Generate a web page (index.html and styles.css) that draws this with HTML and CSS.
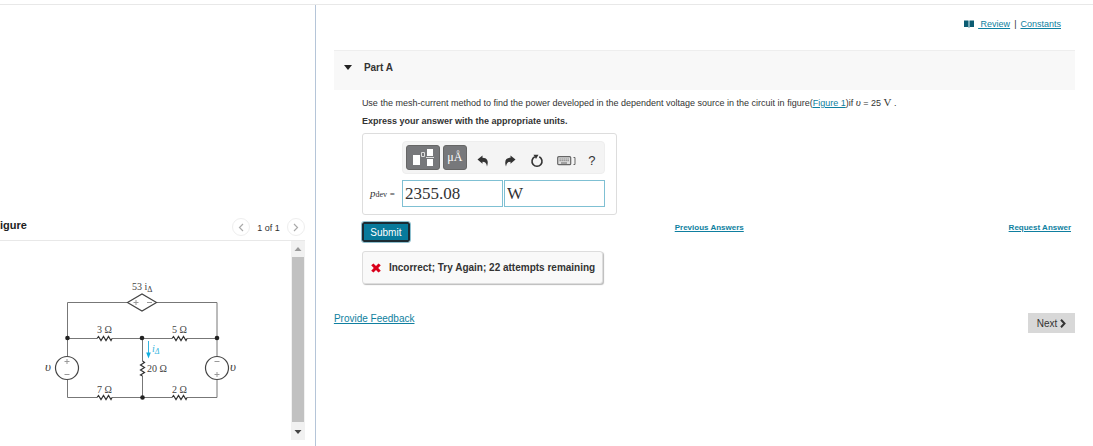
FILE: index.html
```
<!DOCTYPE html>
<html lang="en">

<head>
    <meta charset="UTF-8">
    <meta name="viewport" content="width=device-width, initial-scale=1.0">
    <title>Part A</title>
    <link rel="stylesheet" href="styles.css">
</head>

<body>

    <div class="page">
        <!-- Figure panel -->
        <aside class="figure-panel">
            <div class="figure-header">
                <h2>igure</h2>
                <div class="pager">
                    <button class="pager-button" aria-label="Previous figure">
                        <svg width="6" height="9" viewBox="0 0 6 9"><path d="M5 1 1.500 4.500 5 8" fill="none" stroke="#aaa" stroke-width="1.200"/></svg>
                    </button>
                    <span>1 of 1</span>
                    <button class="pager-button" aria-label="Next figure">
                        <svg width="6" height="9" viewBox="0 0 6 9"><path d="M1 1 4.500 4.500 1 8" fill="none" stroke="#aaa" stroke-width="1.200"/></svg>
                    </button>
                </div>
            </div>
            <div class="figure-body">
                <svg class="circuit" width="260" height="199" viewBox="0 241 260 199">
                    <!-- wires -->
                    <g fill="none" stroke="#777" stroke-width="1">
                        <path d="M128 302.500H67.500V356.500M67.500 379.500V397.500H97M112 397.500H172M187 397.500H217V379.500M217 356.500V302.500H156"/>
                        <path d="M67.500 338.500H97M112 338.500H172M187 338.500H217M142.500 338.500V361M142.500 376V397.500"/>
                    </g>
                    <!-- resistors -->
                    <g fill="none" stroke="#333" stroke-width="1.200">
                        <path d="M97 338.500l1.500-2 2.500 4 2.500-4 2.500 4 2.500-4 2.500 4 1-2"/>
                        <path d="M172 338.500l1.500-2 2.500 4 2.500-4 2.500 4 2.500-4 2.500 4 1-2"/>
                        <path d="M97 397.500l1.500-2 2.500 4 2.500-4 2.500 4 2.500-4 2.500 4 1-2"/>
                        <path d="M172 397.500l1.500-2 2.500 4 2.500-4 2.500 4 2.500-4 2.500 4 1-2"/>
                        <path d="M142.500 361l2 1.500-4 2.500 4 2.500-4 2.500 4 2.500-4 2.500 2 1"/>
                    </g>
                    <!-- sources -->
                    <g fill="#fff" stroke="#444" stroke-width="1.200">
                        <circle cx="67" cy="368" r="11.500"/>
                        <circle cx="217" cy="368" r="11.500"/>
                        <path d="M127.500 302.500 142 294l14.500 8.500L142 311z"/>
                    </g>
                    <g fill="none" stroke="#999" stroke-width="1">
                        <path d="M64.500 361.500h5M67 359v5M64.500 374.500h5M214.500 361.500h5M214.500 374.500h5M217 372v5M133.500 302.500h5M136 300v5M147 302.500h5"/>
                    </g>
                    <g fill="#222">
                        <circle cx="67.500" cy="338" r="2.300"/>
                        <circle cx="142" cy="338" r="2.300"/>
                        <circle cx="217" cy="338" r="2.300"/>
                        <circle cx="142.500" cy="397.500" r="2.300"/>
                    </g>
                    <!-- current arrow -->
                    <path d="M148.500 341v13" stroke="#35b5e0" stroke-width="1"/>
                    <path d="M146.200 352.500h4.600l-2.300 6z" fill="#10aee0"/>
                    <g class="circuit-text">
                        <text x="132" y="290">53 i<tspan class="sub" dy="2">Δ</tspan></text>
                        <text x="97" y="333">3 Ω</text>
                        <text x="172" y="333">5 Ω</text>
                        <text x="97" y="393">7 Ω</text>
                        <text x="172" y="393">2 Ω</text>
                        <text x="147" y="372">20 Ω</text>
                        <text class="current" x="152" y="352">i<tspan class="sub" dy="2">Δ</tspan></text>
                        <text class="volt" x="45" y="371">υ</text>
                        <text class="volt" x="230" y="371">υ</text>
                    </g>
                </svg>
                <div class="scrollbar">
                    <svg width="14" height="16" viewBox="0 0 14 16"><path d="M3.500 10h7L7 6z" fill="#999"/></svg>
                    <div class="thumb"></div>
                    <svg width="14" height="18" viewBox="0 0 14 18"><path d="M3.500 8h7L7 12z" fill="#444"/></svg>
                </div>
            </div>
        </aside>

        <!-- Question -->
        <main class="question">
            <div class="top-links">
                <svg width="10" height="8" viewBox="0 0 10 8"><path d="M0 .500h4.500V7H0zM5.500.500H10V7H5.500z" fill="#0b5c73"/><path d="M4.500 1h1v7h-1z" fill="#69a3b2"/></svg>
                <a href="#">&nbsp;Review</a>
                <span>|</span>
                <a href="#">Constants</a>
            </div>

            <div class="part-header">
                <svg width="8" height="5" viewBox="0 0 8 5"><path d="M0 0h8L4 5z" fill="#222"/></svg>
                <h3>Part A</h3>
            </div>

            <div class="part-body">
                <p>Use the mesh-current method to find the power developed in the dependent voltage source in the circuit in figure(<a href="#">Figure 1</a>)if <i class="math">υ</i> = 25 <span class="math">V</span> .</p>
                <p class="instruction">Express your answer with the appropriate units.</p>

                <div class="answer-box">
                    <div class="toolbar">
                        <button class="tool-dark templates" aria-label="Templates">
                            <svg width="22" height="18" viewBox="0 0 22 18">
                                <path d="M1 6h7v10H1zM15 0h6v7h-6zM15 10h6v7h-6z" fill="#fff"/>
                                <path d="M9.500 3.500h3v4h-3z" fill="none" stroke="#ddd"/>
                                <path d="M14 8.500h8" stroke="#ddd"/>
                            </svg>
                        </button>
                        <button class="tool-dark units">μÅ</button>
                        <button class="tool" aria-label="Undo">
                            <svg width="12" height="12" viewBox="0 0 12 12"><path d="M.500 4.500 5.500.500V2.800C10 2.800 12 6 10 11.500 9.500 8 8 6.700 5.500 6.700V8.800z" fill="#333"/></svg>
                        </button>
                        <button class="tool" aria-label="Redo">
                            <svg width="12" height="12" viewBox="0 0 12 12"><path d="M11.500 4.500 6.500.500V2.800C2 2.800 0 6 2 11.500 2.500 8 4 6.700 6.500 6.700V8.800z" fill="#333"/></svg>
                        </button>
                        <button class="tool" aria-label="Reset">
                            <svg width="14" height="14" viewBox="0 0 14 14"><path d="M9.300 2.800A5 5 0 1 1 4.700 2.800" fill="none" stroke="#333" stroke-width="1.600"/><path d="M3.500.800h5L6 5z" fill="#333"/></svg>
                        </button>
                        <button class="tool keyboard" aria-label="Keyboard shortcuts">
                            <svg width="20" height="11" viewBox="0 0 20 11">
                                <rect x=".700" y="1.700" width="13" height="8" rx="1" fill="#ddd" stroke="#666" stroke-width="1.200"/>
                                <path d="M2.500 4h9.500M2.500 5.700h9.500" stroke="#777" stroke-dasharray="1.300 .700"/>
                                <path d="M4 8h6" stroke="#666"/>
                                <path d="M16.500 2.500h1.500v7h-1.500" fill="none" stroke="#666"/>
                            </svg>
                        </button>
                        <button class="tool help" aria-label="Help">?</button>
                    </div>
                    <div class="answer-row">
                        <label class="answer-label" for="value"><i>p</i><sub>dev</sub> <span>=</span></label>
                        <input type="text" id="value" value="2355.08">
                        <input type="text" id="unit" aria-label="Units" value="W">
                    </div>
                </div>

                <div class="actions">
                    <button class="submit">Submit</button>
                    <a href="#">Previous Answers</a>
                    <a href="#">Request Answer</a>
                </div>

                <div class="feedback">
                    <svg width="10" height="10" viewBox="0 0 10 10"><path d="M2.500.500 5 3 7.500.500 9.800 2.300 7.200 5 9.800 7.800 7.500 9.500 5 7 2.500 9.500.200 7.800 2.800 5 .200 2.300z" fill="#d9001b"/></svg>
                    <span>Incorrect; Try Again; 22 attempts remaining</span>
                </div>
            </div>

            <div class="footer">
                <a href="#">Provide Feedback</a>
                <button class="next">Next
                    <svg width="6" height="9" viewBox="0 0 6 9"><path d="M1 .800 4.500 4.500 1 8.200" fill="none" stroke="#333" stroke-width="2"/></svg>
                </button>
            </div>
        </main>
    </div>

</body>

</html>
```
FILE: styles.css
```
* {
    box-sizing: border-box;
}

body {
    font-family: "Liberation Sans", Arial, sans-serif;
    font-size: 9px;
    line-height: 12px;
    color: #333;
    background-color: #fff;
    margin: 0;
    padding-top: 4px;
}

h2,
h3,
p {
    margin: 0;
}

a {
    color: #0f7fa0;
}

button {
    font-family: inherit;
    border: none;
    padding: 0;
    color: #333;
    cursor: pointer;
}

svg {
    display: block;
    flex: none;
}

.page {
    display: flex;
    min-height: calc(100vh - 4px);
    border-top: 1px solid #e8e8e8;
}

/* Figure panel */
.figure-panel {
    width: 28.9%;
    flex: none;
    padding: 211px 10px 6px 0;
    border-right: 1px solid #b5c5d8;
    display: flex;
    flex-direction: column;
}

.figure-header {
    display: flex;
    justify-content: space-between;
    height: 25px;
    border-bottom: 1px solid #e8e8e8;
}

.figure-header h2 {
    font-size: 11px;
    line-height: 18px;
    color: #222;
}

.pager {
    display: flex;
    gap: 7px;
    height: 22px;
    line-height: 24px;
}

.pager-button {
    width: 18px;
    height: 18px;
    display: flex;
    align-items: center;
    justify-content: center;
    border: 1px solid #eee;
    border-radius: 50%;
    background-color: #fff;
    margin-top: 2px;
}

.figure-body {
    flex: 1;
    display: flex;
    justify-content: space-between;
}

.circuit-text {
    font-family: "Liberation Serif", "Times New Roman", serif;
    font-size: 10px;
    fill: #444;
}

.circuit-text .sub {
    font-size: 8px;
}

.circuit-text .current {
    font-style: italic;
    fill: #35b5e0;
}

.circuit-text .volt {
    font-size: 13px;
    font-style: italic;
}

.scrollbar {
    width: 14px;
    display: flex;
    flex-direction: column;
    background-color: #f1f1f1;
}

.thumb {
    flex: 1;
    margin: 0 1px;
    background-color: #c1c1c1;
}

/* Question */
.question {
    flex: 1;
    padding: 13px 18px 0;
}

.top-links {
    display: flex;
    justify-content: flex-end;
    align-items: center;
    gap: 4px;
    padding-right: 14px;
}

.part-header {
    display: flex;
    align-items: center;
    gap: 12px;
    height: 40px;
    margin-top: 20px;
    padding: 0 10px 6px;
    background-color: #f8f8f8;
    border-top: 1px solid #eee;
}

.part-header h3 {
    font-size: 10px;
}

.part-body {
    padding: 7px 4px 0 28px;
}

.math {
    font-family: "Liberation Serif", "Times New Roman", serif;
    font-size: 11px;
    line-height: 1;
}

.instruction {
    font-weight: bold;
    margin-top: 6px;
}

.answer-box {
    width: 255px;
    margin-top: 6px;
    padding: 7px 11px 7px 7px;
    border: 1px solid #ddd;
    border-radius: 3px;
}

.toolbar {
    display: flex;
    align-items: center;
    height: 33px;
    margin-left: 32px;
    padding-left: 3px;
    background-color: #f4f4f4;
    border: 1px solid #eee;
    border-radius: 4px;
}

.tool-dark {
    height: 25px;
    display: flex;
    align-items: center;
    justify-content: center;
    margin-right: 3px;
    border: 1px solid #666;
    border-radius: 3px;
    background-color: #77787b;
    color: #fff;
}

.templates {
    width: 34px;
}

.units {
    width: 24px;
    font-family: "Liberation Serif", "Times New Roman", serif;
    font-size: 12px;
}

.tool {
    width: 27px;
    display: flex;
    justify-content: center;
    padding-top: 6px;
    background: none;
}

.keyboard {
    width: 32px;
}

.help {
    width: 18px;
    font-size: 13px;
}

.answer-row {
    display: flex;
    align-items: center;
    gap: 1px;
    margin-top: 6px;
}

.answer-label {
    width: 31px;
    font-family: "Liberation Serif", "Times New Roman", serif;
    font-size: 11px;
    white-space: nowrap;
}

.answer-label sub {
    font-size: 8px;
    line-height: 0;
    vertical-align: baseline;
}

.answer-label span {
    font-size: 9px;
}

.answer-row input {
    flex: 1;
    min-width: 0;
    height: 27px;
    padding: 0 2px;
    border: 1px solid #7fc0d3;
    font-family: "Liberation Serif", "Times New Roman", serif;
    font-size: 17px;
    color: #333;
}

.actions {
    display: flex;
    justify-content: space-between;
    margin-top: 7px;
    font-size: 8px;
    font-weight: bold;
}

.submit {
    width: 48px;
    height: 20px;
    border: 2px solid #1c2b33;
    border-radius: 2px;
    outline: 1px solid #8fc0cf;
    background-color: #077a9b;
    color: #fff;
    font-size: 10px;
}

.feedback {
    display: inline-flex;
    align-items: center;
    gap: 8px;
    height: 33px;
    margin-top: 9px;
    padding: 0 7px 0 8px;
    border: 1px solid #ddd;
    border-radius: 3px;
    box-shadow: 1px 1px 1px #bbb;
    background-color: #f9f9f9;
    font-size: 10px;
    font-weight: bold;
}

.footer {
    display: flex;
    justify-content: space-between;
    margin-top: 29px;
    font-size: 10px;
}

.next {
    display: flex;
    align-items: center;
    justify-content: center;
    gap: 3px;
    width: 47px;
    height: 20px;
    background-color: #d8d8d8;
    font-size: 10px;
}
```
